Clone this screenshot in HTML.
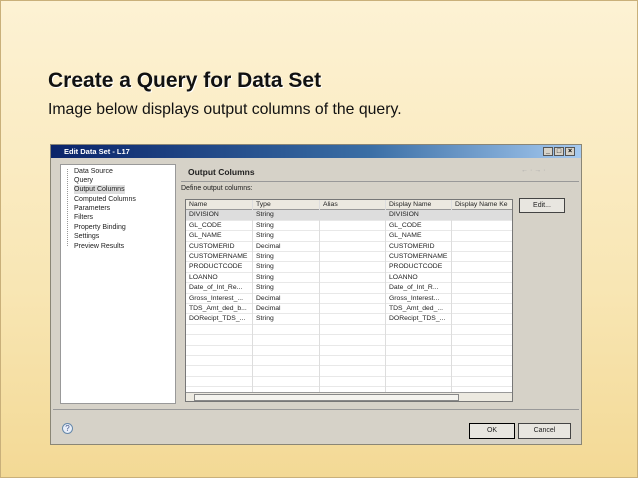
<!DOCTYPE html><html><head><style>
*{margin:0;padding:0;box-sizing:border-box}
body{width:638px;height:478px;overflow:hidden;background:linear-gradient(#fdf2d4,#f8e6b4 60%,#f3d995);font-family:"Liberation Sans",sans-serif;position:relative}
.frame{position:absolute;left:0;top:0;width:638px;height:478px;border:1px solid #c9b07a}
h1{position:absolute;left:48px;top:69px;font-size:21px;font-weight:bold;color:#111;text-shadow:1px 1px 0 #fff}
.sub{position:absolute;left:48px;top:101px;font-size:15.8px;color:#111}
.win{position:absolute;left:50px;top:144px;width:532px;height:301px;background:#d6d2c8;border:1px solid #8a8676;font-size:7px;color:#222}
.tb{position:absolute;left:0;top:0;width:530px;height:13px;background:linear-gradient(90deg,#0a246a,#3a6ea5 60%,#a6caf0);color:#fff;font-weight:bold;font-size:7.5px;padding:2px 0 0 13px}
.tb b{position:absolute;top:2px;width:10px;height:9px;background:#d6d2c8;border:1px solid #555;font-size:7px;color:#000;text-align:center;line-height:7px}
.left{position:absolute;left:9px;top:19px;width:116px;height:240px;background:#fff;border:1px solid #999}
.left div{position:absolute;left:13px;font-size:7px;line-height:9px}
.tbl{position:absolute;left:134px;top:54px;width:328px;height:203px;background:#fff;border:1px solid #777}
.row{position:absolute;left:0;width:326px;height:10.4px;border-bottom:1px solid #e8e8e8;font-size:6.8px;line-height:10px}
.row span{position:absolute;top:0;padding-left:3px}
.vl{position:absolute;top:0;width:1px;height:193px;background:#ddd}
.btn{position:absolute;background:#e8e6e0;border:1px solid #444;text-align:center;font-size:7px}
</style></head><body><div class="frame"></div>
<h1>Create a Query for Data Set</h1>
<div class="sub">Image below displays output columns of the query.</div>
<div class="win">
<div class="tb">Edit Data Set - L17<b style="left:492px">_</b><b style="left:503px">□</b><b style="left:514px">×</b></div>
<div class="left">
<div style="top:2px">Data Source</div><div style="top:11px">Query</div><div style="top:20px;background:#ddd">Output Columns</div><div style="top:30px">Computed Columns</div><div style="top:39px">Parameters</div><div style="top:48px">Filters</div><div style="top:58px">Property Binding</div><div style="top:67px">Settings</div><div style="top:77px">Preview Results</div>
<div style="left:6px;top:4px;width:1px;height:77px;border-left:1px dotted #999"></div>
</div>
<div style="position:absolute;left:137px;top:22px;font-weight:bold;font-size:8.5px">Output Columns</div>
<div style="position:absolute;left:470px;top:22px;color:#aaa;font-size:7px">← · → ·</div>
<div style="position:absolute;left:130px;top:36px;width:398px;height:1px;background:#999"></div>
<div style="position:absolute;left:130px;top:40px">Define output columns:</div>
<div class="tbl">
<div class="row" style="top:0;background:#ece9e0;border-bottom:1px solid #999"><span style="left:0">Name</span><span style="left:67px">Type</span><span style="left:134px">Alias</span><span style="left:200px">Display Name</span><span style="left:266px">Display Name Ke</span></div>
<div class="row" style="top:10.4px;background:#ddd"><span>DIVISION</span><span style="left:67px">String</span><span style="left:200px">DIVISION</span></div>
<div class="row" style="top:20.8px"><span>GL_CODE</span><span style="left:67px">String</span><span style="left:200px">GL_CODE</span></div>
<div class="row" style="top:31.2px"><span>GL_NAME</span><span style="left:67px">String</span><span style="left:200px">GL_NAME</span></div>
<div class="row" style="top:41.6px"><span>CUSTOMERID</span><span style="left:67px">Decimal</span><span style="left:200px">CUSTOMERID</span></div>
<div class="row" style="top:52px"><span>CUSTOMERNAME</span><span style="left:67px">String</span><span style="left:200px">CUSTOMERNAME</span></div>
<div class="row" style="top:62.4px"><span>PRODUCTCODE</span><span style="left:67px">String</span><span style="left:200px">PRODUCTCODE</span></div>
<div class="row" style="top:72.8px"><span>LOANNO</span><span style="left:67px">String</span><span style="left:200px">LOANNO</span></div>
<div class="row" style="top:83.2px"><span>Date_of_Int_Re...</span><span style="left:67px">String</span><span style="left:200px">Date_of_Int_R...</span></div>
<div class="row" style="top:93.6px"><span>Gross_Interest_...</span><span style="left:67px">Decimal</span><span style="left:200px">Gross_Interest...</span></div>
<div class="row" style="top:104px"><span>TDS_Amt_ded_b...</span><span style="left:67px">Decimal</span><span style="left:200px">TDS_Amt_ded_...</span></div>
<div class="row" style="top:114.4px"><span>DORecipt_TDS_...</span><span style="left:67px">String</span><span style="left:200px">DORecipt_TDS_...</span></div>
<div class="row" style="top:124.8px"></div><div class="row" style="top:135.2px"></div><div class="row" style="top:145.6px"></div><div class="row" style="top:156px"></div><div class="row" style="top:166.4px"></div><div class="row" style="top:176.8px"></div>
<div class="vl" style="left:66px"></div><div class="vl" style="left:133px"></div><div class="vl" style="left:199px"></div><div class="vl" style="left:265px"></div>
<div style="position:absolute;left:0;top:192px;width:326px;height:9px;background:#ece9e0;border-top:1px solid #999"><div style="position:absolute;left:8px;top:1px;width:265px;height:7px;border:1px solid #888;background:#f4f3ee"></div></div>
</div>
<div class="btn" style="left:468px;top:53px;width:46px;height:15px;line-height:13px">Edit...</div>
<div style="position:absolute;left:2px;top:264px;width:526px;height:1px;background:#999"></div>
<div style="position:absolute;left:11px;top:278px;width:11px;height:11px;border-radius:50%;border:1px solid #68a;background:#e8eef8;font-size:8px;text-align:center;line-height:9px;color:#458">?</div>
<div class="btn" style="left:418px;top:278px;width:46px;height:16px;line-height:14px;border:1px solid #000">OK</div>
<div class="btn" style="left:467px;top:278px;width:53px;height:16px;line-height:14px">Cancel</div>
</div>
</body></html>
